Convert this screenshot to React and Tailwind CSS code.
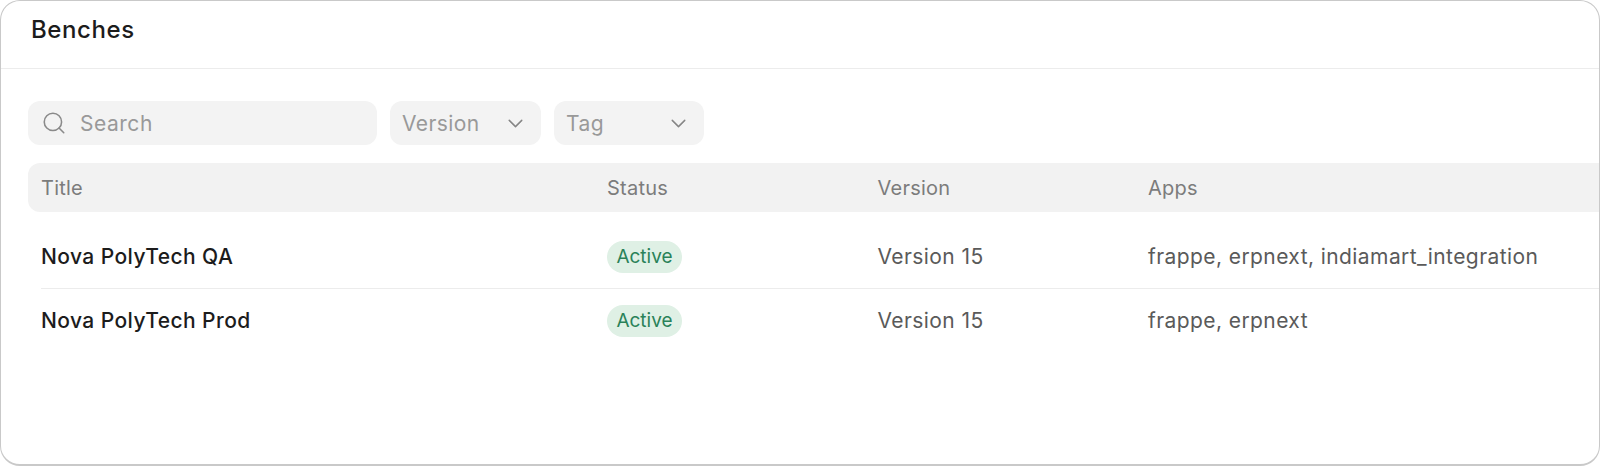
import React from "react";
import { Search, ChevronDown } from "lucide-react";

const rows = [
  { title: "Nova PolyTech QA", version: "Version 15", apps: "frappe, erpnext, indiamart_integration" },
  { title: "Nova PolyTech Prod", version: "Version 15", apps: "frappe, erpnext" },
];

function Filter({ label, width }) {
  return (
    <div className={`flex h-[44px] items-center justify-between rounded-[12px] bg-[#f3f3f3] pl-[12px] pr-[13px] text-[#999999] ${width}`}>
      <span className="text-[21px] leading-none tracking-[0.02em]">{label}</span>
      <ChevronDown size={25} strokeWidth={1.4} className="text-[#858585]" />
    </div>
  );
}

export default function App() {
  return (
    <div className="h-[466px] w-[1600px] bg-white font-['Inter',sans-serif]">
      <div className="h-[466px] overflow-hidden rounded-[20px] border border-[#c9c9c9] border-b-2">
        <header className="flex h-[68px] items-center border-b border-[#ececec] pb-[9px] pl-[30px]">
          <h1 className="text-[24px] font-medium leading-none tracking-[0.024em] text-[#1c1c1c]">Benches</h1>
        </header>
        <div className="pl-[27px] pt-[32px]">
          <div className="flex gap-[13px]">
            <div className="flex h-[44px] w-[349px] items-center gap-[13px] rounded-[12px] bg-[#f3f3f3] pl-[13px] text-[#999999]">
              <Search size={26} strokeWidth={1.45} className="text-[#8a8a8a]" />
              <span className="text-[21px] leading-none tracking-[0.025em]">Search</span>
            </div>
            <Filter label="Version" width="w-[151px]" />
            <Filter label="Tag" width="w-[150px]" />
          </div>
          <div className="mt-[18px] grid h-[49px] grid-cols-[566px_270.5px_270.5px_1fr] items-center rounded-l-[12px] bg-[#f2f2f2] pl-[13px] text-[20px] tracking-[0.012em] text-[#7c7c7c]">
            <span>Title</span>
            <span>Status</span>
            <span>Version</span>
            <span>Apps</span>
          </div>
          <div className="mt-[13px] pl-[13px]">
            {rows.map((r, i) => (
              <div
                key={r.title}
                className={`grid h-[64px] grid-cols-[566px_270.5px_270.5px_1fr] items-center ${i === 0 ? "border-b border-[#ececec]" : ""}`}
              >
                <span className="text-[21px] font-medium tracking-[0.02em] text-[#1c1c1c]">{r.title}</span>
                <span className="flex">
                  <span className="flex h-[32px] w-[75px] items-center justify-center rounded-full bg-[#dff0e5] pt-px text-[19px] text-[#2a8259]">Active</span>
                </span>
                <span className="text-[21px] tracking-[0.02em] text-[#5a5a5a]">{r.version}</span>
                <span className="text-[21px] tracking-[0.02em] text-[#5a5a5a]">{r.apps}</span>
              </div>
            ))}
          </div>
        </div>
      </div>
    </div>
  );
}
